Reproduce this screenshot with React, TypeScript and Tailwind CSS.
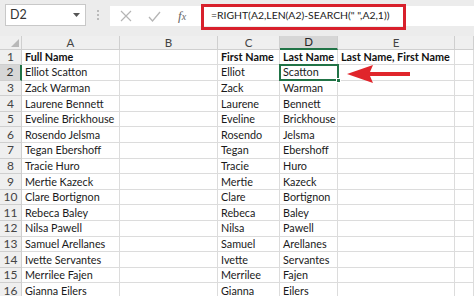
import React from "react";

const rows: [string, string, string, string][] = [
  ["Full Name", "", "First Name", "Last Name"],
  ["Elliot Scatton", "", "Elliot", "Scatton"],
  ["Zack Warman", "", "Zack", "Warman"],
  ["Laurene Bennett", "", "Laurene", "Bennett"],
  ["Eveline Brickhouse", "", "Eveline", "Brickhouse"],
  ["Rosendo Jelsma", "", "Rosendo", "Jelsma"],
  ["Tegan Ebershoff", "", "Tegan", "Ebershoff"],
  ["Tracie Huro", "", "Tracie", "Huro"],
  ["Mertie Kazeck", "", "Mertie", "Kazeck"],
  ["Clare Bortignon", "", "Clare", "Bortignon"],
  ["Rebeca Baley", "", "Rebeca", "Baley"],
  ["Nilsa Pawell", "", "Nilsa", "Pawell"],
  ["Samuel Arellanes", "", "Samuel", "Arellanes"],
  ["Ivette Servantes", "", "Ivette", "Servantes"],
  ["Merrilee Fajen", "", "Merrilee", "Fajen"],
  ["Gianna Eilers", "", "Gianna", "Eilers"],
];

const cols = ["A", "B", "C", "D", "E", ""];

export default function App() {
  return (
    <div className="relative w-[474px] h-[296px] overflow-hidden bg-white text-[#1a1a1a]" style={{ fontFamily: "Lato, 'Open Sans', sans-serif" }}>
      {/* formula bar */}
      <div className="h-[36px] bg-[#ececec] flex items-start pt-[4px]">
        <div className="ml-[5px] w-[81px] h-[22px] bg-white border border-[#c8c8c8] flex items-center justify-between pl-[4px] pr-[5px] text-[12.5px] text-[#333]">
          <span>D2</span>
          <svg width="7" height="4" viewBox="0 0 7 4"><path d="M0 0 L7 0 L3.5 4 Z" fill="#555" /></svg>
        </div>
        <div className="w-[24px] h-[22px] flex flex-col items-center justify-center gap-[2px]">
          <span className="w-[2px] h-[2px] bg-[#aaa] rounded-full" />
          <span className="w-[2px] h-[2px] bg-[#aaa] rounded-full" />
          <span className="w-[2px] h-[2px] bg-[#aaa] rounded-full" />
        </div>
        <div className="flex-1 mt-[2px] h-[20px] bg-white flex items-center">
          <div className="w-[90px] flex items-center">
            <svg className="ml-[10px]" width="12" height="12" viewBox="0 0 12 12"><path d="M1 1 L11 11 M11 1 L1 11" stroke="#b5b5b5" strokeWidth="1.2" /></svg>
            <svg className="ml-[16px]" width="13" height="11" viewBox="0 0 13 11"><path d="M1 6 L4.5 10 L12 1" stroke="#b5b5b5" strokeWidth="1.3" fill="none" /></svg>
            <span className="ml-[17px] text-[13px] italic text-[#666]" style={{ fontFamily: "'Liberation Serif', serif" }}>f<span className="text-[10px]">x</span></span>
          </div>
          <div className="pl-[11px] text-[10.4px] text-[#1a1a1a] whitespace-nowrap" style={{ fontFamily: "Lato, sans-serif" }}>=RIGHT(A2,LEN(A2)-SEARCH(" ",A2,1))</div>
        </div>
      </div>

      {/* grid */}
      <div className="grid grid-cols-[22px_98px_98px_62px_58px_117px_1fr] grid-rows-[13.5px_repeat(16,15.6px)] text-[10.8px]">
        {/* header row */}
        <div className="relative bg-[#efefef] border-r border-b border-[#cfcfcf]">
          <svg className="absolute right-[2px] bottom-[2px]" width="8" height="8" viewBox="0 0 8 8"><path d="M8 0 L8 8 L0 8 Z" fill="#b8b8b8" /></svg>
        </div>
        {cols.map((c, i) => (
          <div
            key={c + i}
            className={
              i === 3
                ? "bg-[#d6d6d6] border-r border-b-2 border-r-[#cfcfcf] border-b-[#217346] flex items-center justify-center text-[#262626] text-[11.5px] leading-none"
                : "bg-[#efefef] border-r border-b border-[#cfcfcf] flex items-center justify-center text-[#444] text-[11.5px] leading-none"
            }
          >
            {c}
          </div>
        ))}

        {rows.map((r, ri) => (
          <React.Fragment key={ri}>
            <div
              className={
                ri === 1
                  ? "bg-[#d6d6d6] border-r-2 border-b border-r-[#217346] border-b-[#cfcfcf] flex items-center justify-center text-[12px] text-[#333] leading-none"
                  : "bg-[#efefef] border-r border-b border-[#cfcfcf] flex items-center justify-center text-[12px] text-[#444] leading-none"
              }
            >
              {ri + 1}
            </div>
            {[r[0], r[1], r[2], r[3], ri === 0 ? "Last Name, First Name" : "", ""].map((v, ci) => (
              <div
                key={ci}
                className={
                  "border-r border-b border-[#dcdcdc] flex items-center pl-[3px] pt-[1px] whitespace-nowrap overflow-visible leading-none " +
                  (ri === 0 ? "font-bold text-[#111]" : "")
                }
              >
                {v}
              </div>
            ))}
          </React.Fragment>
        ))}
      </div>

      {/* selected cell D2 */}
      <div className="absolute left-[279px] top-[64px] w-[60px] h-[17px] border-2 border-[#217346]">
        <div className="absolute right-[-4px] bottom-[-4px] w-[5px] h-[5px] bg-[#217346] border border-white" />
      </div>

      {/* red box around formula */}
      <div className="absolute left-[201px] top-[4px] w-[205px] h-[26px] border-[3px] border-[#d8202c]" />

      {/* red arrow */}
      <svg className="absolute left-[344px] top-[61px]" width="70" height="26" viewBox="0 0 70 26">
        <path d="M3 13 L29 4 L26 11 L66 11 L66 15 L26 15 L29 22 Z" fill="#e0252b" />
      </svg>
    </div>
  );
}
